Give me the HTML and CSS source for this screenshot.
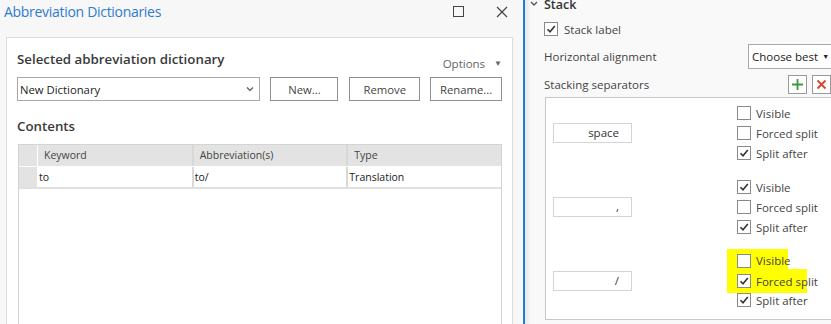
FILE: index.html
```html
<!DOCTYPE html>
<html lang="en">
<head>
    <meta charset="UTF-8">
    <title>Abbreviation Dictionaries</title>

    <link rel="stylesheet" href="styles.css">
</head>
<body>
    <div class="dialog">
        <div class="title-bar">
            <div class="title">Abbreviation Dictionaries</div>
            <div class="win-btn win-max"><span class="max-box"></span></div>
            <div class="win-btn win-close">
                <svg width="12" height="12" viewBox="0 0 12 12"><path d="M1 1L11 11M11 1L1 11" stroke="#444" stroke-width="1.2" fill="none"/></svg>
            </div>
        </div>

        <div class="panel">
            <div class="panel-head">
                <div class="heading">Selected abbreviation dictionary</div>
                <div class="options">Options <span class="tri">&#9660;</span></div>
            </div>

            <div class="controls">
                <div class="select">
                    <span>New Dictionary</span>
                    <svg width="8" height="6" viewBox="0 0 8 6"><path d="M1 1.5L4 4.5L7 1.5" stroke="#555" stroke-width="1.2" fill="none"/></svg>
                </div>
                <div class="btn btn-new">New...</div>
                <div class="btn btn-remove">Remove</div>
                <div class="btn btn-rename">Rename...</div>
            </div>

            <div class="heading contents">Contents</div>

            <div class="grid">
                <div class="grid-row grid-header">
                    <div class="cell row-head"></div>
                    <div class="cell">Keyword</div>
                    <div class="cell">Abbreviation(s)</div>
                    <div class="cell">Type</div>
                </div>
                <div class="grid-row grid-data">
                    <div class="cell row-head"></div>
                    <div class="cell">to</div>
                    <div class="cell">to/</div>
                    <div class="cell">Translation</div>
                </div>
            </div>
        </div>
    </div>

    <div class="divider"></div>

    <div class="props">
        <div class="section-head">
            <svg width="8" height="6" viewBox="0 0 8 6"><path d="M1 1L4 4L7 1" stroke="#555" stroke-width="1.4" fill="none"/></svg>
            <span>Stack</span>
        </div>

        <div class="check-row stack-label">
            <span class="box checked"><svg viewBox="0 0 12 12"><path d="M2.5 6.2L5 8.8L9.8 3" stroke="#333" stroke-width="1.6" fill="none"/></svg></span>
            <span>Stack label</span>
        </div>

        <div class="prop-row align-row">
            <span>Horizontal alignment</span>
            <div class="combo">Choose best <span class="tri">&#9660;</span></div>
        </div>

        <div class="prop-row sep-row">
            <span>Stacking separators</span>
            <div class="tool-btns">
                <div class="tool-btn">
                    <svg width="13" height="13" viewBox="0 0 13 13"><path d="M6.5 1V12M1 6.5H12" stroke="#3c9a3c" stroke-width="1.8" fill="none"/></svg>
                </div>
                <div class="tool-btn">
                    <svg width="11" height="11" viewBox="0 0 11 11"><path d="M1.5 1.5L9.5 9.5M9.5 1.5L1.5 9.5" stroke="#d9432f" stroke-width="1.8" fill="none"/></svg>
                </div>
            </div>
        </div>

        <div class="sep-box">
            <div class="sep-group">
                <div class="sep-input">space</div>
                <div class="sep-checks">
                    <div class="check-row"><span class="box"></span><span>Visible</span></div>
                    <div class="check-row"><span class="box"></span><span>Forced split</span></div>
                    <div class="check-row"><span class="box checked"><svg viewBox="0 0 12 12"><path d="M2.5 6.2L5 8.8L9.8 3" stroke="#333" stroke-width="1.6" fill="none"/></svg></span><span>Split after</span></div>
                </div>
            </div>

            <div class="sep-group">
                <div class="sep-input">,</div>
                <div class="sep-checks">
                    <div class="check-row"><span class="box checked"><svg viewBox="0 0 12 12"><path d="M2.5 6.2L5 8.8L9.8 3" stroke="#333" stroke-width="1.6" fill="none"/></svg></span><span>Visible</span></div>
                    <div class="check-row"><span class="box"></span><span>Forced split</span></div>
                    <div class="check-row"><span class="box checked"><svg viewBox="0 0 12 12"><path d="M2.5 6.2L5 8.8L9.8 3" stroke="#333" stroke-width="1.6" fill="none"/></svg></span><span>Split after</span></div>
                </div>
            </div>

            <div class="sep-group">
                <div class="sep-input">/</div>
                <div class="sep-checks">
                    <div class="check-row mark mark-visible"><span class="box"></span><span>Visible</span></div>
                    <div class="check-row mark mark-forced"><span class="box checked"><svg viewBox="0 0 12 12"><path d="M2.5 6.2L5 8.8L9.8 3" stroke="#333" stroke-width="1.6" fill="none"/></svg></span><span>Forced split</span></div>
                    <div class="check-row"><span class="box checked"><svg viewBox="0 0 12 12"><path d="M2.5 6.2L5 8.8L9.8 3" stroke="#333" stroke-width="1.6" fill="none"/></svg></span><span>Split after</span></div>
                </div>
            </div>
        </div>
    </div>
</body>
</html>
```

FILE: styles.css
```css
html, body {
    margin: 0;
    height: 100%;
    overflow: hidden;
}

body {
    display: flex;
    font-family: "Open Sans", "Noto Sans", sans-serif;
    color: #333333;
    background-color: #f7f7f7;
}

/* left dialog */

.dialog {
    width: 523px;
    flex-shrink: 0;
    display: flex;
    flex-direction: column;
    background-color: #f7f7f7;
}

.title-bar {
    height: 37px;
    display: flex;
    align-items: flex-start;
}

.title {
    margin: 2px 0 0 4px;
    font-size: 14px;
    letter-spacing: -0.3px;
    color: #2d7bce;
    flex: 1;
}

.win-btn {
    height: 24px;
    display: flex;
    align-items: center;
}

.win-max {
    margin-right: 32px;
}

.max-box {
    width: 9px;
    height: 9px;
    margin-top: -2px;
    border: 1px solid #444444;
}

.win-close {
    margin-right: 15px;
}

.panel {
    flex: 1;
    margin-left: 6px;
    width: 507px;
    box-sizing: border-box;
    border: 1px solid #dcdcdc;
    border-bottom: none;
    background-color: #ffffff;
    padding: 0 10px 0 10px;
    display: flex;
    flex-direction: column;
}

.panel-head {
    display: flex;
    justify-content: space-between;
    align-items: flex-end;
    height: 30px;
}

.heading {
    font-size: 13.3px;
    font-weight: 600;
    color: #3a3a3a;
}

.options {
    font-size: 11.5px;
    color: #666666;
    margin-bottom: -3px;
}

.options .tri {
    font-size: 8px;
    margin-left: 6px;
    vertical-align: 2px;
}

.controls {
    display: flex;
    margin-top: 9px;
    height: 24px;
}

.select {
    width: 244px;
    border: 1px solid #a9a9a9;
    display: flex;
    align-items: center;
    justify-content: space-between;
    padding: 0 5px 0 2px;
    font-size: 11.3px;
    color: #222222;
    box-sizing: border-box;
}

.btn {
    border: 1px solid #8f8f8f;
    box-sizing: border-box;
    font-size: 11.3px;
    color: #444444;
    display: flex;
    align-items: center;
    justify-content: center;
}

.btn-new {
    width: 68px;
    margin-left: 10px;
}

.btn-remove {
    width: 71px;
    margin-left: 11px;
}

.btn-rename {
    width: 72px;
    margin-left: 10px;
}

.contents {
    margin-top: 15px;
    height: 20px;
    line-height: 20px;
}

.grid {
    flex: 1;
    margin: 8px 0 0 1px;
    width: 484px;
    box-sizing: border-box;
    border: 1px solid #d4d4d4;
    border-bottom: none;
}

.grid-row {
    display: flex;
    height: 20px;
    line-height: 20px;
    font-size: 10.5px;
}

.grid-header {
    height: 21px;
    line-height: 21px;
    background-color: #e3e3e3;
    border-bottom: 1px solid #ffffff;
    color: #444444;
}

.grid-header .cell {
    padding-left: 6px;
}

.grid-data {
    border-bottom: 2px solid #e0e0e0;
    color: #222222;
}

.cell {
    width: 155px;
    box-sizing: border-box;
    border-left: 2px solid #d8d8d8;
    padding-left: 1px;
}

.cell.row-head {
    width: 18px;
    border-left: none;
    background-color: #e3e3e3;
}

.grid-row .cell:nth-child(2) {
    border-left: 1px solid #ffffff;
}

/* blue divider */

.divider {
    width: 2px;
    flex-shrink: 0;
    background-color: #1f7fd0;
}

/* right properties pane */

.props {
    flex: 1;
    overflow: hidden;
    background: linear-gradient(to right, #e6e6e6 0, #f9f9f9 6px);
    font-size: 11.5px;
    color: #444444;
}

.section-head {
    display: flex;
    align-items: center;
    height: 12px;
    padding-left: 5px;
    font-size: 12.5px;
    font-weight: 600;
    color: #333333;
}

.section-head svg {
    margin-right: 6px;
    margin-top: -4px;
}

.section-head span {
    margin-top: -4px;
}

.check-row {
    display: flex;
    align-items: center;
    height: 20px;
    gap: 5px;
    white-space: nowrap;
}

.box {
    flex-shrink: 0;
    width: 12px;
    height: 12px;
    border: 1px solid #8a8a8a;
    background-color: #ffffff;
    display: flex;
}

.box svg {
    width: 12px;
    height: 12px;
}

.stack-label {
    margin: 7px 0 0 19px;
    gap: 6px;
}

.prop-row {
    display: flex;
    align-items: center;
    justify-content: space-between;
    padding-left: 19px;
    white-space: nowrap;
}

.align-row {
    margin-top: 5px;
    height: 25px;
}

.combo {
    width: 91px;
    height: 25px;
    flex-shrink: 0;
    box-sizing: border-box;
    border: 1px solid #a9a9a9;
    background-color: #ffffff;
    display: flex;
    align-items: center;
    padding-left: 3px;
    color: #222222;
    margin-right: -8px;
}

.combo .tri {
    font-size: 7px;
    margin-left: 4px;
}

.sep-row {
    height: 20px;
    margin-top: 5px;
}

.tool-btns {
    display: flex;
    gap: 5px;
}

.tool-btn {
    width: 19px;
    height: 19px;
    box-sizing: border-box;
    border: 1px solid #9a9a9a;
    background-color: #ffffff;
    display: flex;
    align-items: center;
    justify-content: center;
}

.sep-box {
    margin: 3px 0 0 20px;
    width: 320px;
    height: 223px;
    box-sizing: border-box;
    border: 1px solid #c8c8c8;
    border-right: none;
    background-color: #ffffff;
    padding: 5px 0 0 7px;
    display: flex;
    flex-direction: column;
    gap: 14px;
}

.sep-group {
    display: flex;
    align-items: center;
}

.sep-input {
    width: 79px;
    height: 20px;
    box-sizing: border-box;
    border: 1px solid #d4d4d4;
    text-align: right;
    padding-right: 12px;
    line-height: 18px;
    color: #333333;
}

.sep-checks {
    margin-left: 105px;
}

.mark {
    background-color: #ffff00;
    margin-left: -10px;
    padding-left: 10px;
    box-sizing: border-box;
}

.mark-visible {
    width: 61px;
    margin-top: -2px;
    padding-top: 2px;
    height: 21px;
}

.mark-forced {
    width: 80px;
    margin-top: -1px;
    margin-bottom: -3px;
    height: 24px;
}
```
